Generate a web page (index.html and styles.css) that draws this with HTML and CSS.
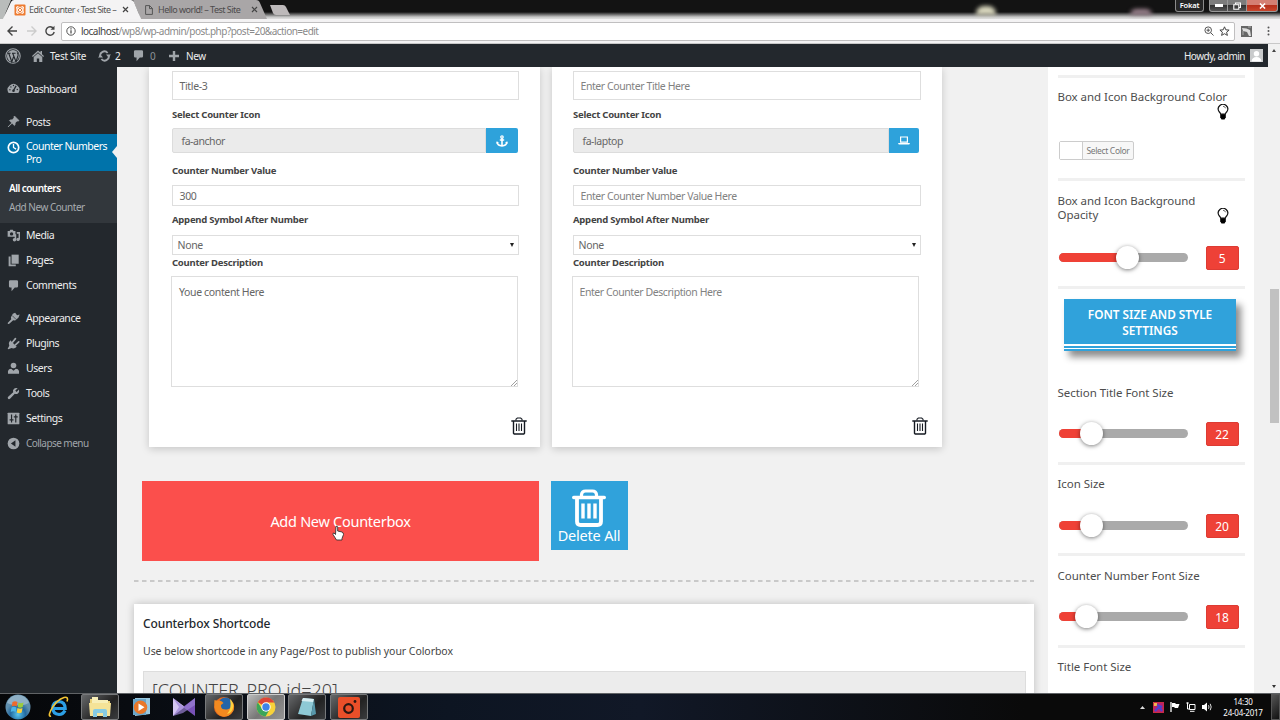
FILE: index.html
```html
<!DOCTYPE html>
<html lang="en">
<head>
<meta charset="utf-8">
<title>Edit Counter ‹ Test Site</title>
<link rel="stylesheet" href="styles.css">
</head>
<body>
<svg class="defs" width="0" height="0">
  <symbol id="trash" viewBox="0 0 34 38"><g fill="none" stroke="currentColor"><path d="M1.700 8.500h30.600" stroke-width="3.400" stroke-linecap="round"/><path d="M9.500 8V5.500Q10 2 13.500 2h7Q24 2 24.500 5.500V8" stroke-width="3.200"/><path d="M5 9V32.500Q5 36 8.500 36h17Q29 36 29 32.500V9" stroke-width="3.800"/><path d="M11 14.500v15M17 14.500v15M23 14.500v15" stroke-width="3.400"/></g></symbol>
  <symbol id="bin" viewBox="0 0 16 18"><g fill="none" stroke="currentColor"><path d="M.3 4h15.400" stroke-width="1.500"/><path d="M5 3.500V2.200L6.300 1h3.400L11 2.200v1.300" stroke-width="1.100"/><path d="M2.500 4v12.300l.7.700h9.600l.7-.7V4" stroke-width="1.400"/><path d="M5.500 6.500v7.500M8 6.500v7.500M10.500 6.500v7.500" stroke-width="1.100"/></g></symbol>
  <symbol id="bulb" viewBox="0 0 12 16"><path d="M3.700 10.200Q3.300 8.800 2.200 7.800A4.700 4.700 0 1 1 9.800 7.800Q8.700 8.800 8.300 10.200z" fill="#fff" stroke="#111" stroke-width="1.200"/><path d="M6 2.300q2 0 2.600 2" fill="none" stroke="#444" stroke-width=".8"/><path d="M3.200 10.300h5.600v3L7.500 15.500h-3L3.200 13.300z" fill="#000"/></symbol>
  <symbol id="comment" viewBox="0 0 20 20"><path d="M5 2h10q2 0 2 2v7q0 2-2 2h-3l-5 6v-6H5q-2 0-2-2V4q0-2 2-2z" fill="currentColor"/></symbol>
</svg>

<header class="tabs">
  <svg class="tab-shapes" width="300" height="19" viewBox="0 0 300 19">
    <path d="M0 0h11L3 19H0z" fill="#b9bcbb"/>
    <path d="M133 0h123q3 0 4 3l7 16H141z" fill="#a9a6a7"/>
    <path d="M3 19 11 2q1-2 3-2h117q2 0 3 2l7 17z" fill="#f4f3f4"/>
    <path d="M270 5h13q2 0 3 2l4 8h-14q-2 0-3-2z" fill="#bdb9ba"/>
  </svg>
  <div class="tab tab-a">
    <svg width="12" height="12" viewBox="0 0 12 12"><rect x=".5" y=".5" width="11" height="11" rx="1" fill="#ee7b30"/><path d="M3 2.500q3 2 6 0v7q-3-2-6 0zM2.500 3q2 3 0 6M9.500 3q-2 3 0 6M4 4l4 4M8 4 4 8" stroke="#fff" fill="none" stroke-width=".9"/></svg>
    <span class="tab-name">Edit Counter ‹ Test Site –</span><svg class="x" width="7" height="7" viewBox="0 0 7 7"><path d="M1 1l5 5M6 1 1 6" stroke="#444" stroke-width="1.200"/></svg>
  </div>
  <div class="tab tab-b">
    <svg width="8" height="10" viewBox="0 0 8 10"><path d="M.6.600h4l2.800 2.800v6H.6zM4.500.600v3h3" fill="none" stroke="#555"/></svg>
    <span class="tab-name">Hello world! – Test Site</span><svg class="x" width="7" height="7" viewBox="0 0 7 7"><path d="M1 1l5 5M6 1 1 6" stroke="#444" stroke-width="1.200"/></svg>
  </div>
  <div class="glow glow-a"></div><div class="glow glow-b"></div>
  <div class="win">
    <span class="user">Fokat</span>
    <span class="wbtn first"><i class="min"></i></span><span class="wbtn"><svg width="8" height="8" viewBox="0 0 8 8"><path d="M2.500 2V1h5v4.500H6M.8 2.800h5v4.400h-5z" fill="none" stroke="#fff" stroke-width="1.100"/></svg></span><span class="wbtn close"><svg width="7" height="6" viewBox="0 0 8 7"><path d="M1 .6l6 5.800M7 .6 1 6.400" stroke="#fff" stroke-width="1.800"/></svg></span>
  </div>
</header>

<div class="toolbar">
  <svg class="nav" width="50" height="12" viewBox="0 0 50 12" fill="none" stroke-width="1.400"><path d="M10 6H1.500M5.500 1.500 1 6l4.500 4.500" stroke="#444"/><path d="M20 6h8.500M24.500 1.500 29 6l-4.500 4.500" stroke="#ccc"/><path d="M46.500 3.500A4.200 4.200 0 1 0 47.200 7" stroke="#444"/><path d="M47.500.800v4h-4z" fill="#444"/></svg>
  <div class="omnibox">
    <svg width="10" height="10" viewBox="0 0 10 10"><circle cx="5" cy="5" r="4.200" fill="none" stroke="#555"/><path d="M5 4.300v3.200M5 2.300v1.200" stroke="#444" stroke-width="1.200"/></svg>
    <span class="url"><b>localhost</b>/wp8/wp-admin/post.php?post=20&amp;action=edit</span>
    <svg width="10" height="10" viewBox="0 0 10 10" fill="none" stroke="#555"><circle cx="4.200" cy="4.200" r="3.300"/><path d="M6.700 6.700l2.800 2.800M2.500 4.200h3.400M4.200 2.500v3.400"/></svg>
    <svg width="11" height="10" viewBox="0 0 11 10"><path d="M5.500.8l1.300 3 3.300.300-2.500 2.100.8 3.200-2.900-1.700-2.900 1.700.8-3.200L.9 4.100l3.300-.3z" fill="none" stroke="#444"/></svg>
  </div>
  <svg width="11" height="11" viewBox="0 0 11 11"><rect width="11" height="11" fill="#666"/><path d="M1 2q5 0 8 2l1 6H8L6 6 2 5z" fill="#ddd"/><path d="M2 5v4M7 1h3" stroke="#aaa"/></svg>
  <svg class="dots" width="3" height="10" viewBox="0 0 3 10" fill="#555"><circle cx="1.500" cy="1.500" r="1"/><circle cx="1.500" cy="5" r="1"/><circle cx="1.500" cy="8.500" r="1"/></svg>
</div>

<div class="viewport">
<div class="page">
  <div class="adminbar">
    <svg class="wp" width="16" height="16" viewBox="0 0 16 16"><circle cx="8" cy="8" r="7.200" fill="none" stroke="#a0a5aa" stroke-width="1.100"/><circle cx="8" cy="8" r="6" fill="#a0a5aa"/><path d="M2.600 5.300h3M7 5.300h3.600M3.800 5.500l3 8.300 1.800-5M7.800 5.500l3.200 8.300L13 7.500q.5-2-1-3" fill="none" stroke="#23282d" stroke-width="1.100"/></svg>
    <svg class="home" width="12" height="12" viewBox="0 0 12 12" fill="#a0a5aa"><path d="M6 .5 0 6l.8.9L6 2.300l5.200 4.600.8-.9-2-1.800V1H8.500v1.600z"/><path d="M1.700 7 6 3.200 10.300 7v5H7.200V8.500H4.800V12H1.700z"/></svg>
    <span class="ab-site">Test Site</span>
    <svg class="upd" width="13" height="12" viewBox="0 0 13 12"><path d="M2.200 6.500A4.200 4.200 0 0 1 9.600 3M10.800 5.500A4.200 4.200 0 0 1 3.400 9" fill="none" stroke="#a0a5aa" stroke-width="1.900"/><path d="M8 4.500h5L10.500 7.500zM5 7.500H0L2.500 4.500z" fill="#a0a5aa"/></svg>
    <span class="ab-num">2</span>
    <svg class="cm"><use href="#comment"/></svg><span class="ab-zero">0</span>
    <svg class="plus" width="10" height="10" viewBox="0 0 10 10"><path d="M5 0v10M0 5h10" stroke="#a0a5aa" stroke-width="2.400"/></svg><span class="ab-new">New</span>
    <span class="howdy">Howdy, admin</span>
    <svg width="13" height="13" viewBox="0 0 13 13"><rect width="13" height="13" fill="#c9cbcc"/><circle cx="6.500" cy="4.800" r="2.700" fill="#fff"/><path d="M1.500 12.500q.5-4.500 5-4.500t5 4.500z" fill="#fff"/></svg>
  </div>

  <div class="body">
  <nav class="menu">
    <div class="mi"><svg viewBox="0 0 20 20"><path d="M2.500 17A9 9 0 1 1 17.500 17z" fill="currentColor"/><path d="M10 13l4-7" stroke="#23282d" stroke-width="2"/><g fill="#23282d"><circle cx="4.500" cy="12" r="1.100"/><circle cx="6" cy="7.500" r="1.100"/><circle cx="10" cy="5.500" r="1.100"/><circle cx="15.800" cy="11.500" r="1.100"/><circle cx="10" cy="13.500" r="2"/></g></svg>Dashboard</div>
    <div class="mi gap"><svg viewBox="0 0 20 20"><path d="M11.500 1.500l7 7-1.500 1-1.300-.4-3.200 3.200q.5 2.500-1 4L7.800 12.700 1.500 18.500l5.800-6.300L3.700 8.500q1.500-1.500 4-1l3.200-3.200-.4-1.300z" fill="currentColor" stroke="currentColor"/></svg>Posts</div>
    <div class="mi current"><svg viewBox="0 0 20 20" fill="none" stroke="#fff" stroke-width="2.600"><circle cx="10" cy="10" r="8"/><path d="M10 4.500V10l4 2.500" stroke-width="2"/></svg><span>Counter Numbers<br>Pro</span></div>
    <div class="sub"><b>All counters</b><span>Add New Counter</span></div>
    <div class="mi"><svg viewBox="0 0 20 20"><path d="M1 3h3l1-2h4l1 2h3v9H1z" fill="currentColor"/><circle cx="7" cy="7.500" r="2.600" fill="#23282d"/><path d="M15 6h4v10M13 8v8" fill="none" stroke="currentColor" stroke-width="2.400"/><circle cx="11.500" cy="16.500" r="2.600" fill="currentColor"/><circle cx="17" cy="16" r="2.600" fill="currentColor"/></svg>Media</div>
    <div class="mi"><svg viewBox="0 0 20 20"><path d="M7 1h11v14H7z" fill="currentColor"/><path d="M5.500 4H2.500v15h11v-3H5.500z" fill="currentColor"/></svg>Pages</div>
    <div class="mi"><svg><use href="#comment"/></svg>Comments</div>
    <div class="mi gap"><svg viewBox="0 0 20 20"><path d="M9 2.500 12.500 1l3 4 4-1-2 5-5 4-3-.5L3 18.500q-2 .5-2-1.500l5.500-6-.5-3z" fill="currentColor"/><path d="M8 5.500l6 6" stroke="#23282d"/></svg>Appearance</div>
    <div class="mi"><svg viewBox="0 0 20 20"><path d="M5 5l10 10q-4 4-8 2l-5 2-1-1 2.500-4.500Q1.500 9 5 5z" fill="currentColor"/><path d="M8.500 8l4.500-5.500M13 12l5-4.500" stroke="currentColor" stroke-width="2.600" stroke-linecap="round"/></svg>Plugins</div>
    <div class="mi"><svg viewBox="0 0 20 20" fill="currentColor"><circle cx="10" cy="5.500" r="4.300"/><path d="M1.500 18v-4q1-3.500 5-3.500l3.500 3 3.500-3q4 0 5 3.500v4z"/></svg>Users</div>
    <div class="mi"><svg viewBox="0 0 20 20"><path d="M16.500 2 12.700 5.500l2 2L18.500 4q1 4-1.700 6-2.300 1.500-4.800.5L5 17.800Q3 19.500 1.600 18T2.200 14.800L9.500 8Q8.500 5.500 10.500 3.200T16.500 2z" fill="currentColor"/></svg>Tools</div>
    <div class="mi"><svg viewBox="0 0 20 20"><rect x="1" y="1" width="18" height="18" rx="1" fill="currentColor"/><path d="M7 4v12M13.500 4v12M4 12h6M10.500 7.500h6" stroke="#23282d" stroke-width="1.800"/></svg>Settings</div>
    <div class="mi collapse"><svg viewBox="0 0 20 20"><circle cx="10" cy="10" r="9" fill="currentColor"/><path d="M13 5v10l-7-5z" fill="#23282d"/></svg>Collapse menu</div>
  </nav>

  <main class="content">
    <div class="cards">
      <section class="card">
        <div class="field title">Title-3</div>
        <div class="label">Select Counter Icon</div>
        <div class="group"><span class="ro">fa-anchor</span><span class="addon"><svg width="12" height="12" viewBox="0 0 12 12" fill="none" stroke="#fff"><circle cx="6" cy="2" r="1.200" stroke-width="1.300"/><path d="M6 3v8M3.800 5h4.400" stroke-width="1.600"/><path d="M1.200 7.200Q1.500 10.600 6 10.800q4.500-.2 4.800-3.600" stroke-width="1.700"/><path d="M.3 8.800.7 6.300l2.200 1.200zM11.700 8.800l-.4-2.500-2.200 1.200z" fill="#fff" stroke="none"/></svg></span></div>
        <div class="label low">Counter Number Value</div>
        <div class="field">300</div>
        <div class="label">Append Symbol After Number</div>
        <div class="field select">None<i></i></div>
        <div class="label tight">Counter Description</div>
        <div class="area">Youe content Here<svg width="7" height="7" viewBox="0 0 7 7"><path d="M1 7l6-6M4 7l3-3" stroke="#888" stroke-width=".8"/></svg></div>
        <svg class="del"><use href="#bin"/></svg>
      </section>
      <section class="card">
        <div class="field title ph">Enter Counter Title Here</div>
        <div class="label">Select Counter Icon</div>
        <div class="group"><span class="ro">fa-laptop</span><span class="addon narrow"><svg width="12" height="9" viewBox="0 0 12 9"><path d="M2.600 1h6.800v5.200H2.600z" fill="none" stroke="#fff" stroke-width="1.200"/><path d="M.2 7h11.600v.5q0 1-1 1H1.200q-1 0-1-1z" fill="#fff"/></svg></span></div>
        <div class="label low">Counter Number Value</div>
        <div class="field ph">Enter Counter Number Value Here</div>
        <div class="label">Append Symbol After Number</div>
        <div class="field select">None<i></i></div>
        <div class="label tight">Counter Description</div>
        <div class="area ph">Enter Counter Description Here<svg width="7" height="7" viewBox="0 0 7 7"><path d="M1 7l6-6M4 7l3-3" stroke="#888" stroke-width=".8"/></svg></div>
        <svg class="del"><use href="#bin"/></svg>
      </section>
    </div>
    <div class="actions">
      <div class="add"><span>Add New Counterbox</span>
        <svg class="cursor" width="12" height="16" viewBox="0 0 12 16"><path d="M4 1.500q1.300-1 1.700.500V6l4.300 1q1.500.500 1.500 2.500L10 13.500v1.500H4.500L1 9.500Q.5 8 2 8l1.500 1.500z" fill="#fff" stroke="#333" stroke-width=".9"/></svg>
      </div>
      <div class="delall"><svg><use href="#trash"/></svg><span>Delete All</span></div>
    </div>
    <svg class="dash" width="900" height="2" viewBox="0 0 900 2"><path d="M0 1h900" stroke="#bcbcbc" stroke-width="1.300" stroke-dasharray="4.500 3.500"/></svg>
    <section class="short">
      <h3>Counterbox Shortcode</h3>
      <p>Use below shortcode in any Page/Post to publish your Colorbox</p>
      <div class="code"><span>[COUNTER_PRO id=20]</span></div>
    </section>
  </main>

  <aside class="side">
    <hr>
    <div class="s-color"><h4>Box and Icon Background Color</h4><svg class="bulb"><use href="#bulb"/></svg>
      <div class="picker"><i></i><span>Select Color</span></div></div>
    <hr>
    <div class="s-op"><div class="row"><h4>Box and Icon Background<br>Opacity</h4><svg class="bulb"><use href="#bulb"/></svg></div>
      <div class="slider"><div class="track"><div class="fill" style="width:68px"></div></div><span class="val">5</span></div></div>
    <hr>
    <div class="banner"><span>FONT SIZE AND STYLE</span><span>SETTINGS</span></div>
    <div class="opt"><h4>Section Title Font Size</h4><div class="slider"><div class="track"><div class="fill" style="width:32px"></div></div><span class="val">22</span></div></div>
    <hr>
    <div class="opt"><h4>Icon Size</h4><div class="slider"><div class="track"><div class="fill" style="width:32px"></div></div><span class="val">20</span></div></div>
    <hr>
    <div class="opt"><h4>Counter Number Font Size</h4><div class="slider"><div class="track"><div class="fill" style="width:27px"></div></div><span class="val">18</span></div></div>
    <hr>
    <div class="opt"><h4>Title Font Size</h4></div>
  </aside>
  </div>
</div>
<div class="scroll"><i class="up"></i><div class="thumb"></div><i class="down"></i></div>
</div>

<footer class="taskbar">
  <div class="t orb"><svg width="26" height="26" viewBox="0 0 26 26"><defs><radialGradient id="o" cy=".8"><stop offset="0" stop-color="#59c6ee"/><stop offset=".6" stop-color="#246a9f"/><stop offset="1" stop-color="#5f8fae"/></radialGradient></defs><circle cx="13" cy="13" r="12.500" fill="url(#o)"/><path d="M2 9Q5 1 13 1t11 8q-10 5-22 0z" fill="#fff" opacity=".3"/><path d="M7.500 8q2.500-1.500 5 0l-.8 4.500q-2.500-1.300-5 0z" fill="#ee6a2c"/><path d="M13.500 8.500q2.500 1.300 5 0l-.8 4.500q-2.500 1.300-5 0z" fill="#9bcb3c"/><path d="M6.500 13.500q2.500-1.500 5 0l-.8 4.500q-2.500-1.300-5 0z" fill="#4bb4e8"/><path d="M12.500 14q2.500 1.300 5 0l-.8 4.500q-2.500 1.300-5 0z" fill="#fbd03a"/></svg></div>
  <div class="t ie"><svg width="22" height="22" viewBox="0 0 22 22"><path d="M17 14.500Q15 18.500 11 18.500 4.800 18 4.800 12T11 5.500q6 .3 6.200 7H6.500" fill="none" stroke="#2c9fe5" stroke-width="3.200"/><path d="M3 20Q0 21 2.500 15 8 4 16 1.500q5-1 3 4" fill="none" stroke="#f3c433" stroke-width="1.600"/></svg></div>
  <div class="t btn b1"><svg width="24" height="21" viewBox="0 0 24 21"><path d="M2 2h7l2 2h11v15H2z" fill="#ecd277"/><path d="M4 0h6v3h10v3H4z" fill="#f8efb8"/><path d="M1 6h22l-1 13H2z" fill="#f5e397"/><path d="M5 20v-6q0-2 2-2h10q2 0 2 2v6h-4v-4H9v4z" fill="#86cce3"/></svg></div>
  <div class="t wmp"><svg width="19" height="18" viewBox="0 0 19 18"><path d="M3 0h15v16L3 18z" fill="#9bc9df"/><path d="M1 1h13v16H1z" fill="#6aa6c9"/><circle cx="8.500" cy="9.300" r="6.700" fill="#ea7829"/><path d="M6.500 5.500v7.500l6-3.800z" fill="#fff"/></svg></div>
  <div class="t vs"><svg width="22" height="18" viewBox="0 0 22 18"><path d="M0 0l12 9L0 18z" fill="#d4c6f2"/><path d="M22 0v18L10 9z" fill="#7852b8"/><path d="M0 0l11 9 11-9v7L10 15 0 18l6-9z" fill="#9a82d4" opacity=".7"/></svg></div>
  <div class="t btn b2"><svg width="22" height="22" viewBox="0 0 22 22"><circle cx="11" cy="11" r="10" fill="#e66a1f"/><circle cx="12.500" cy="8.500" r="7" fill="#2565a8"/><path d="M1.500 4Q4 5 6 4.500q3 0 4.500 2.500l-2.500 2q-.5 5 6 4.500 5-1 6-7 2.500 5-.5 9.500Q15 22 8 20 0 16 1.500 4z" fill="#f28a20"/><path d="M17 3q4.500 4 3 9-1 5-6 6 5-5 3-15z" fill="#ffd23d"/></svg></div>
  <div class="t btn b3 active"><svg width="20" height="20" viewBox="0 0 20 20"><circle cx="10" cy="10" r="9.500" fill="#f8d23a"/><path d="M10 10 1.800 5.200A9.500 9.500 0 0 1 18.400 5.600H10z" fill="#dc4538"/><path d="M1.800 5.200A9.500 9.500 0 0 0 9.500 19.500L13.800 12.200 10 10 6.200 12.200z" fill="#3ba55a"/><circle cx="10" cy="10" r="4.700" fill="#fff"/><circle cx="10" cy="10" r="3.700" fill="#3e83e8"/></svg></div>
  <div class="t btn b4"><svg width="20" height="20" viewBox="0 0 20 20"><path d="M6 1l11 1-3 17L1 17z" fill="#8ec9d5"/><path d="M6 1l11 1-.7 3L4.500 4z" fill="#d8eef2"/><path d="M17 2l2 15-5 2z" fill="#5798ab"/></svg></div>
  <div class="t btn b5"><svg width="22" height="21" viewBox="0 0 22 21"><rect width="22" height="21" rx="2" fill="#ea4f29"/><circle cx="10.500" cy="11.500" r="4.300" fill="none" stroke="#2b1712" stroke-width="2.200"/><circle cx="17" cy="4.500" r="1.400" fill="#2b1712"/></svg></div>
  <div class="tray">
    <svg width="5" height="3" viewBox="0 0 5 3"><path d="M2.500 0 5 3H0z" fill="#ddd"/></svg>
    <svg class="pk" width="11" height="11" viewBox="0 0 11 11"><rect width="11" height="11" fill="#b52370"/><path d="M0 0h4v4H0z" fill="#f0b64c"/><path d="M2 9l4-4 3 4M4 3l5 2" stroke="#4c41cf" stroke-width="2" fill="none"/><path d="M.5.500h10v10H.5z" fill="none" stroke="#cb2b42"/></svg>
    <svg width="10" height="10" viewBox="0 0 10 10"><path d="M1 0v10" stroke="#fff" stroke-width="1.300"/><path d="M2 1h3l1 1h3.500L8 6H5L4 5H2z" fill="#fff"/></svg>
    <svg width="10" height="10" viewBox="0 0 10 10"><path d="M3.500 2.500H9V7.500H3.500zM4 9.300h4.500M1.500.500v4M.3 1h2.500M1.500 4v3h2" fill="none" stroke="#fff"/></svg>
    <svg width="10" height="10" viewBox="0 0 10 10"><path d="M0 3h2l3-2.500v9L2 7H0z" fill="#fff"/><path d="M6.500 3.200q1 1.800 0 3.600M8.200 1.800q2 3.200 0 6.400" stroke="#ddd" fill="none"/></svg>
    <div class="clock"><span>14:30</span><span>24-04-2017</span></div>
    <div class="peek"></div>
  </div>
</footer>
</body>
</html>
```
FILE: styles.css
```css
* { box-sizing: border-box; }
body { margin: 0; width: 1280px; height: 720px; overflow: hidden; display: flex; flex-direction: column; font-family: "Noto Sans", "Open Sans", sans-serif; font-size: 10.500px; color: #555; background: #f1f1f1; }
svg { flex: none; display: block; }
.defs { position: absolute; }
i { display: block; }

.tabs { height: 19px; flex: none; position: relative; display: flex; background: linear-gradient(#131313 0, #131313 12px, #5c5c5c 14px, #c6c6c6 17px, #e0e0e0 19px); }
.tab-shapes { position: absolute; left: 0; top: 0; }
.tab { position: relative; display: flex; align-items: center; height: 19px; font-size: 9px; color: #555; white-space: nowrap; }
.tab-name { width: 88px; letter-spacing: -.57px; }
.tab-a { padding-left: 14px; width: 140px; gap: 3px; }
.tab-a .x { margin-left: 2px; }
.tab-b { padding-left: 5px; gap: 5px; color: #4d4b4c; }
.tab-b .x { margin-left: 0; }
.tab-b .tab-name { letter-spacing: -.52px; }
.glow { position: absolute; top: 6px; height: 9px; width: 20px; border-radius: 8px 8px 0 0; filter: blur(2px); }
.glow-a { left: 976px; background: #d8d6bd; }
.glow-b { left: 1130px; top: 9px; height: 6px; width: 22px; background: #9d8490; }
.win { position: absolute; right: 2px; top: 0; height: 13px; display: flex; }
.user { width: 29px; height: 12px; margin-right: 5px; border: 1px solid #8b8b8b; border-top: 0; border-radius: 0 0 3px 3px; background: #262626; color: #fff; font-size: 7.500px; font-weight: 600; line-height: 11px; text-align: center; letter-spacing: -.2px; }
.wbtn { width: 19px; height: 12px; display: flex; align-items: center; justify-content: center; border: 1px solid #999; border-left: 0; border-top: 0; background: linear-gradient(#7c7c7c 45%, #333 50%, #555); }
.wbtn.first { border-left: 1px solid #999; border-radius: 0 0 0 3px; }
.wbtn.close { width: 31px; background: linear-gradient(#d48073 45%, #b6301b 50%, #c9472d); border-radius: 0 0 3px 0; }
.min { width: 8px; height: 3px; background: #fff; }

.toolbar { height: 25px; flex: none; display: flex; align-items: center; background: #f3f2f3; border-bottom: 1px solid #c8c8c8; padding: 0 10px 0 7px; }
.nav { margin-right: 4px; }
.omnibox { width: 1174px; height: 19px; border: 1px solid #c0bfc0; border-radius: 2px; background: #fff; display: flex; align-items: center; padding: 0 4px 0 4px; gap: 5px; margin-right: 6px; font-size: 10px; }
.url { flex: 1; color: #8a8a8a; letter-spacing: -.52px; }
.url b { font-weight: 400; color: #444; }
.dots { margin-left: auto; }

.viewport { height: 649px; flex: none; display: flex; }
.page { width: 1268px; display: flex; flex-direction: column; }
.adminbar { height: 23px; flex: none; background: #23282d; color: #eee; display: flex; align-items: center; padding: 0 5px 0 5px; font-size: 10px; }
.adminbar span { white-space: nowrap; }
.home { margin: 0 6px 0 11px; }
.ab-site { width: 37px; letter-spacing: -.3px; }
.upd { margin: 0 4px 0 11px; }
.ab-num { width: 7px; }
.cm { width: 13px; height: 13px; color: #a0a5aa; margin: 0 5px 0 10px; }
.ab-zero { width: 7px; color: #8d9296; }
.plus { margin: 0 7px 0 12px; }
.ab-new { flex: 1; letter-spacing: -.4px; }
.adminbar .howdy { margin-right: 5px; letter-spacing: -.5px; }

.body { flex: 1; display: flex; min-height: 0; overflow: hidden; background: #f1f1f1; }
.menu { width: 117px; flex: none; background: #23282d; padding-top: 9px; color: #eee; font-size: 10.500px; }
.mi { height: 25px; display: flex; align-items: center; gap: 6px; padding-left: 7px; letter-spacing: -.44px; white-space: nowrap; }
.mi svg { width: 13px; height: 13px; color: #a0a5aa; }
.mi.gap { margin-top: 8px; }
.mi.current { position: relative; height: 37px; background: #0073aa; line-height: 13px; color: #fff; padding-top: 1px; letter-spacing: -.52px; }
.mi.current svg { margin-bottom: 12px; }
.mi.current::after { content: ""; position: absolute; right: 0; top: 12px; border: 6px solid transparent; border-left: 0; border-right: 5px solid #f1f1f1; }
.sub { height: 51.500px; background: #32373c; padding: 7.500px 0 0 9px; display: flex; flex-direction: column; font-size: 10px; line-height: 19.500px; color: #a7acb0; letter-spacing: -.48px; }
.sub b { color: #fff; font-weight: 600; letter-spacing: -.55px; }
.mi.collapse { color: #a0a5aa; font-size: 10px; letter-spacing: -.55px; }

.content { width: 931px; flex: none; padding-left: 17px; }
.cards { display: flex; gap: 11.500px; padding-left: 15px; height: 380px; }
.card { width: 391px; height: 380px; background: #fff; padding: 4px 21px 0 23px; box-shadow: 0 2px 8px rgba(0,0,0,.18); }
.card + .card { width: 390.500px; padding-left: 21.500px; }
.field { height: 21px; border: 1px solid #dedede; padding: 0 6.500px; display: flex; align-items: center; color: #666; letter-spacing: -.35px; }
.field.title { height: 29px; }
.field.ph, .area.ph { color: #828282; letter-spacing: -.42px; padding-left: 6.500px; }
.label { height: 29px; display: flex; align-items: center; font-weight: 700; font-size: 9.500px; color: #444; letter-spacing: -.23px; padding-bottom: 1.500px; }
.title + .label { height: 28px; padding-bottom: 0; }
.label.low { height: 32px; padding: 3px 0 0; }
.label.tight { height: 21px; padding-bottom: 6px; }
.group { display: flex; height: 25px; width: 346px; letter-spacing: -.45px; }
.ro { flex: 1; background: #ebebeb; border: 1px solid #dcdcdc; border-radius: 2px 0 0 2px; padding: 1px 0 0 8.500px; display: flex; align-items: center; color: #666; }
.addon { width: 32px; background: #2ea2db; border-radius: 0 2px 2px 0; display: flex; align-items: center; justify-content: center; }
.addon.narrow { width: 30px; }
.field.select { height: 20px; padding: 0 4px 0 4.500px; justify-content: space-between; }
.select i { border: 2px solid transparent; border-top: 4px solid #222; border-bottom: 0; }
.area { position: relative; width: 347px; height: 111px; margin-left: -1px; border: 1px solid #dedede; padding: 7.500px 7px; letter-spacing: -.36px; color: #666; }
.area svg { position: absolute; right: 0; bottom: 0; }
.del { width: 16px; height: 18px; color: #151a22; margin: 29.500px 0 0 339px; }

.actions { display: flex; gap: 11.500px; margin: 34px 0 0 8px; height: 80px; align-items: flex-start; }
.add { position: relative; width: 397px; height: 79.500px; background: #fb4f4c; color: #fff; font-size: 14.500px; letter-spacing: -.28px; display: flex; align-items: center; justify-content: center; }
.cursor { position: absolute; left: 189.500px; top: 43.500px; }
.delall { width: 77px; height: 69px; background: #30a2db; color: #fff; font-size: 14.500px; letter-spacing: -.2px; display: flex; flex-direction: column; align-items: center; padding-top: 8px; line-height: 17px; white-space: nowrap; }
.delall svg { width: 34px; height: 38px; }
.dash { margin-top: 19px; }
.short { width: 900px; height: 120px; margin-top: 22px; background: #fff; box-shadow: 0 0 8px rgba(0,0,0,.22); padding: 0 8px 0 9px; }
.short h3 { margin: 0; padding-top: 10.500px; font-size: 12px; line-height: 18px; font-weight: 500; color: #23282d; letter-spacing: -.1px; }
.short p { margin: 10px 0 0; line-height: 16px; font-size: 10.500px; color: #444; letter-spacing: -.05px; }
.code { margin-top: 12px; height: 50px; background: #ececec; border: 1px solid #ddd; padding: 4px 8px; font-size: 18px; line-height: 28px; color: #444; font-weight: 300; }

.side { width: 206px; flex: none; background: #fff; padding: 8px 9px 0 10px; color: #4d4d4d; }
.side hr { margin: 0; border: 0; height: 3px; background: #f0f0f0; }
.side h4 { margin: 0 0 0 -.5px; font-weight: 400; font-size: 11.500px; line-height: 14.500px; white-space: nowrap; letter-spacing: -.04px; }
.bulb { width: 12px; height: 16px; }
.s-color { height: 100px; padding-top: 12px; }
.s-color .bulb { margin: -1px 0 0 159.300px; }
.picker { margin: 21px 0 0 1px; width: 75px; height: 19px; border: 1px solid #ccc; border-radius: 2px; display: flex; background: #f7f7f7; font-size: 8.500px; color: #777; letter-spacing: -.35px; }
.picker i { width: 23px; background: #fff; border-right: 1px solid #ccc; }
.picker span { flex: 1; text-align: center; line-height: 17px; white-space: nowrap; }
.s-op { height: 104.500px; padding-top: 12.500px; }
.row { display: flex; height: 29px; }
.row h4 { width: 159.800px; }
.row .bulb { margin-top: 14px; }
.slider { display: flex; align-items: center; justify-content: space-between; height: 24px; padding: 0 6.500px 0 1px; }
.s-op .slider { margin-top: 23px; }
.track { width: 129px; height: 9px; border-radius: 5px; background: #aaa; margin-bottom: 1px; }
.fill { position: relative; height: 9px; border-radius: 5px 0 0 5px; background: #ef4136; }
.fill::after { content: ""; position: absolute; right: -12px; top: -7px; width: 23px; height: 23px; border-radius: 50%; background: #fff; box-shadow: 0 1px 4px rgba(0,0,0,.5); }
.val { width: 33px; height: 24px; border-radius: 2px; background: #ee4137; border: 1px solid #dd3b33; color: #fff; text-align: center; line-height: 23px; font-size: 12px; letter-spacing: -.2px; }
.banner { margin: 10.500px 9px 27.500px 6px; height: 52px; background: linear-gradient(#30a2db 45px, #fff 45px, #fff 47px, #30a2db 47px, #30a2db 49px, #fff 49px, #fff 50.500px, #30a2db 50.500px); box-shadow: 5px 6px 7px rgba(0,0,0,.45); color: #fff; font-weight: 600; font-size: 11.800px; line-height: 15.500px; padding-top: 8px; display: flex; flex-direction: column; align-items: center; white-space: nowrap; }
.opt { height: 88.500px; padding-top: 12.500px; }
.banner + .opt { height: 83px; padding-top: 7px; }
.opt .slider { margin-top: 22px; }

.scroll { width: 12px; background: #f1f1f1; display: flex; flex-direction: column; align-items: center; }
.up { margin-top: 5px; border: 2.500px solid transparent; border-bottom: 3px solid #444; border-top: 0; }
.thumb { width: 9px; height: 134px; margin-top: 237px; background: #c1c1c1; align-self: flex-end; margin-right: 1px; }
.down { margin-top: auto; margin-bottom: 5px; border: 2.500px solid transparent; border-top: 3px solid #333; border-bottom: 0; }

.taskbar { height: 27px; flex: none; display: flex; background: linear-gradient(90deg, #060709, #0d1522 35%, #111827 50%, #0a0a0a 80%); border-top: 1px solid #606366; }
.t { display: flex; align-items: center; justify-content: center; height: 26px; }
.orb { width: 36px; }
.ie { width: 45px; }
.btn { width: 38px; border: 1px solid #77797b; border-radius: 2px; background: linear-gradient(135deg, #66686a, #222 60%, #3a3c3e); }
.btn.active { background: linear-gradient(135deg, #bbb, #777 50%, #949494); border-color: #ccc; }
.wmp { width: 44px; }
.vs { width: 42px; }
.b2, .b3, .b4 { margin-right: 3.500px; }
.tray { flex: 1; display: flex; align-items: center; justify-content: flex-end; gap: 6px; }
.tray .pk { margin-left: 2px; }
.clock { width: 44px; margin-left: 3px; display: flex; flex-direction: column; align-items: center; color: #fff; font-size: 8px; line-height: 11px; letter-spacing: -.25px; white-space: nowrap; }
.peek { width: 9px; height: 26px; border: 1px solid #555; background: linear-gradient(135deg, #555, #111); }
```
